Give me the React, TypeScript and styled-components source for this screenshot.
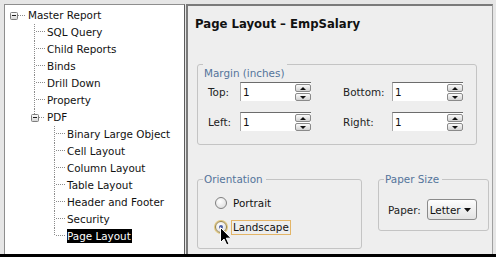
import React from 'react';
import styled, { createGlobalStyle } from 'styled-components';

const FONT = `'DejaVu Sans', 'Noto Sans', sans-serif`;
const DOT = '#8c8c8c';

const GlobalStyle = createGlobalStyle`
    html, body {
        margin: 0;
        padding: 0;
        background: #e6e6e6;
    }
    * {
        box-sizing: border-box;
    }
`;

const Frame = styled.div`
    position: relative;
    width: 496px;
    height: 257px;
    display: flex;
    flex-direction: column;
    background: #e6e6e6;
    font-family: ${FONT};
    font-size: 10.4px;
    color: #111;
    overflow: hidden;
`;

const Main = styled.div`
    flex: 1;
    min-height: 0;
    display: flex;
    gap: 1px;
    padding: 4px 3px 0 4px;
`;

const BottomEdge = styled.div`
    height: 3px;
    background: #000;
`;

/* ---------- tree ---------- */

const TreePanel = styled.div`
    width: 181px;
    flex: none;
    background: #fff;
    border-top: 1px solid #8e8e8e;
    border-left: 1px solid #8e8e8e;
    border-right: 1px solid #5c5c5c;
    padding-top: 2px;
`;

const TreeRow = styled.div`
    display: flex;
    height: 17px;
`;

const IndentCell = styled.div`
    width: 20px;
    flex: none;
`;

const TreeLabel = styled.div<{ $root?: boolean }>`
    margin-left: ${(p) => (p.$root ? 3 : 2)}px;
    line-height: 17px;
    white-space: nowrap;
`;

const Selected = styled.span`
    display: inline-block;
    line-height: 14px;
    padding: 0 1px 0 0;
    background: #000;
    color: #fff;
`;

type ConnectorProps = { last?: boolean; handle?: 'root' | 'child' };

const Connector = ({ last, handle }: ConnectorProps) => {
    if (handle === 'root') {
        return (
            <svg width='20' height='17' style={{ display: 'block', flex: 'none' }}>
                <defs>
                    <linearGradient id='hgRoot' x1='0' y1='0' x2='0' y2='1'>
                        <stop offset='0' stopColor='#ffffff' />
                        <stop offset='1' stopColor='#d4d4d4' />
                    </linearGradient>
                </defs>
                <line x1='13' y1='8.5' x2='20' y2='8.5' stroke={DOT} strokeDasharray='1 1' />
                <rect x='5.5' y='5.5' width='7' height='7' rx='1' fill='url(#hgRoot)' stroke='#7e7e7e' />
                <rect x='7' y='8' width='4' height='1' fill='#1a1a1a' />
            </svg>
        );
    }
    if (handle === 'child') {
        return (
            <svg width='20' height='17' style={{ display: 'block', flex: 'none' }}>
                <defs>
                    <linearGradient id='hgChild' x1='0' y1='0' x2='0' y2='1'>
                        <stop offset='0' stopColor='#ffffff' />
                        <stop offset='1' stopColor='#d4d4d4' />
                    </linearGradient>
                </defs>
                <line x1='9.5' y1='0' x2='9.5' y2='5' stroke={DOT} strokeDasharray='1 1' />
                <line x1='14' y1='8.5' x2='20' y2='8.5' stroke={DOT} strokeDasharray='1 1' />
                <rect x='6.5' y='5.5' width='7' height='7' rx='1' fill='url(#hgChild)' stroke='#7e7e7e' />
                <rect x='8' y='8' width='4' height='1' fill='#1a1a1a' />
            </svg>
        );
    }
    return (
        <svg width='20' height='17' style={{ display: 'block', flex: 'none' }}>
            <line x1='9.5' y1='0' x2='9.5' y2={last ? 8 : 17} stroke={DOT} strokeDasharray='1 1' />
            <line x1='11' y1='7.5' x2='20' y2='7.5' stroke={DOT} strokeDasharray='1 1' />
        </svg>
    );
};

type Node = { label: string; level: number; last?: boolean; handle?: 'root' | 'child'; selected?: boolean };

const NODES: Node[] = [
    { label: 'Master Report', level: 0, handle: 'root' },
    { label: 'SQL Query', level: 1 },
    { label: 'Child Reports', level: 1 },
    { label: 'Binds', level: 1 },
    { label: 'Drill Down', level: 1 },
    { label: 'Property', level: 1 },
    { label: 'PDF', level: 1, handle: 'child' },
    { label: 'Binary Large Object', level: 2 },
    { label: 'Cell Layout', level: 2 },
    { label: 'Column Layout', level: 2 },
    { label: 'Table Layout', level: 2 },
    { label: 'Header and Footer', level: 2 },
    { label: 'Security', level: 2 },
    { label: 'Page Layout', level: 2, last: true, selected: true },
];

const Tree = () => (
    <TreePanel>
        {NODES.map((n) => (
            <TreeRow key={n.label}>
                {Array.from({ length: n.level }).map((_, i) => (
                    <IndentCell key={i} />
                ))}
                <Connector last={n.last} handle={n.handle} />
                <TreeLabel $root={n.level === 0}>{n.selected ? <Selected>{n.label}</Selected> : n.label}</TreeLabel>
            </TreeRow>
        ))}
    </TreePanel>
);

/* ---------- form ---------- */

const FormPanel = styled.div`
    flex: 1;
    background: #eeeeee;
    border-top: 2px solid #7a7a7a;
    border-left: 2px solid #7a7a7a;
    border-right: 1px solid #a0a0a0;
    padding: 11px 0 0 9px;
`;

const Title = styled.h1`
    margin: 0 0 0 -2px;
    font-size: 11.7px;
    line-height: 14px;
    font-weight: bold;
    color: #111;
`;

const GroupBox = styled.fieldset<{ $width: number; $top: number }>`
    width: ${(p) => p.$width}px;
    min-width: 0;
    margin: ${(p) => p.$top}px 0 0 0;
    padding: 0;
    border: 1px solid #c4c4c4;
    border-radius: 3px;
`;

const GroupTitle = styled.legend<{ $drop?: number }>`
    margin-left: 5px;
    padding: ${(p) => p.$drop || 0}px 3px 0 1px;
    line-height: 12px;
    color: #54749b;
`;

const MarginRows = styled.div`
    display: flex;
    flex-direction: column;
    gap: 11px;
    padding: 3px 0 13px 10px;
`;

const MarginRow = styled.div`
    display: flex;
    gap: 32px;
`;

const FieldPair = styled.div<{ $width: number }>`
    display: flex;
    align-items: center;
    width: ${(p) => p.$width}px;
`;

const FieldLabel = styled.span`
    flex: 1;
    color: #222;
    white-space: nowrap;
`;

const Spinner = styled.div`
    display: flex;
    width: 71px;
    height: 19px;
    flex: none;
    background: #fff;
    border-top: 1px solid #6c6c6c;
    border-left: 1px solid #a8a8a8;
`;

const SpinValue = styled.span`
    flex: 1;
    padding-left: 2px;
    line-height: 18px;
    color: #111;
`;

const SpinButtons = styled.div`
    display: flex;
    flex-direction: column;
    gap: 1px;
    width: 16px;
    padding-top: 1px;
`;

const SpinButton = styled.div`
    flex: 1;
    display: flex;
    align-items: center;
    justify-content: center;
    border: 1px solid #8a8a8a;
    border-radius: 2px;
    background: linear-gradient(#fbfbfb, #d2d2d2);
`;

const Arrow = ({ up }: { up?: boolean }) => (
    <svg width='6' height='3' style={{ display: 'block' }}>
        <polygon points={up ? '0,3 3,0 6,3' : '0,0 6,0 3,3'} fill='#111' />
    </svg>
);

const MarginField = ({ label, width }: { label: string; width: number }) => (
    <FieldPair $width={width}>
        <FieldLabel>{label}</FieldLabel>
        <Spinner>
            <SpinValue>1</SpinValue>
            <SpinButtons>
                <SpinButton>
                    <Arrow up />
                </SpinButton>
                <SpinButton>
                    <Arrow />
                </SpinButton>
            </SpinButtons>
        </Spinner>
    </FieldPair>
);

const LowerGroups = styled.div`
    display: flex;
    align-items: flex-start;
    gap: 16px;
`;

const RadioList = styled.div`
    display: flex;
    flex-direction: column;
    gap: 8px;
    padding: 10px 0 13px 17px;
`;

const RadioRow = styled.div`
    display: flex;
    align-items: center;
    gap: 4px;
    height: 16px;
`;

const RadioCircle = styled.span<{ $checked?: boolean }>`
    width: 12px;
    height: 12px;
    flex: none;
    display: flex;
    align-items: center;
    justify-content: center;
    border-radius: 50%;
    border: 1px solid ${(p) => (p.$checked ? '#9a8446' : '#808080')};
    background: radial-gradient(circle at 40% 35%, #ffffff, #d8d8d8);
    box-shadow: ${(p) => (p.$checked ? '0 0 0 1px #e2c77a' : 'none')};
`;

const RadioDot = styled.span`
    width: 4px;
    height: 4px;
    border-radius: 50%;
    background: #4a5fa3;
`;

const RadioLabel = styled.span<{ $focused?: boolean }>`
    padding: 0 1px;
    line-height: 13px;
    border: 1px solid ${(p) => (p.$focused ? '#e3b567' : 'transparent')};
    color: #111;
`;

const PaperRow = styled.div`
    display: flex;
    align-items: center;
    gap: 6px;
    padding: 14px 0 10px 9px;
`;

const Combo = styled.div`
    display: flex;
    align-items: center;
    justify-content: space-between;
    width: 50px;
    height: 21px;
    padding: 0 5px 0 2px;
    border: 1px solid #8a8a8a;
    border-radius: 3px;
    background: linear-gradient(#fdfdfd, #e2e2e2);
    color: #111;
`;

const Pointer = styled.svg`
    position: absolute;
    left: 220px;
    top: 227px;
`;

const Form = () => (
    <FormPanel>
        <Title>Page Layout – EmpSalary</Title>

        <GroupBox $width={280} $top={18}>
            <GroupTitle $drop={18}>Margin (inches)</GroupTitle>
            <MarginRows>
                <MarginRow>
                    <MarginField label='Top:' width={103} />
                    <MarginField label='Bottom:' width={120} />
                </MarginRow>
                <MarginRow>
                    <MarginField label='Left:' width={103} />
                    <MarginField label='Right:' width={120} />
                </MarginRow>
            </MarginRows>
        </GroupBox>

        <LowerGroups>
            <GroupBox $width={165} $top={28}>
                <GroupTitle>Orientation</GroupTitle>
                <RadioList>
                    <RadioRow>
                        <RadioCircle />
                        <RadioLabel>Portrait</RadioLabel>
                    </RadioRow>
                    <RadioRow>
                        <RadioCircle $checked>
                            <RadioDot />
                        </RadioCircle>
                        <RadioLabel $focused>Landscape</RadioLabel>
                    </RadioRow>
                </RadioList>
            </GroupBox>

            <GroupBox $width={111} $top={28}>
                <GroupTitle>Paper Size</GroupTitle>
                <PaperRow>
                    <FieldLabel style={{ flex: 'none' }}>Paper:</FieldLabel>
                    <Combo>
                        <span>Letter</span>
                        <svg width='7' height='4' style={{ display: 'block' }}>
                            <polygon points='0,0 7,0 3.5,4' fill='#111' />
                        </svg>
                    </Combo>
                </PaperRow>
            </GroupBox>
        </LowerGroups>
    </FormPanel>
);

const App = () => (
    <>
        <GlobalStyle />
        <Frame>
            <Main>
                <Tree />
                <Form />
            </Main>
            <BottomEdge />
            <Pointer width='12' height='19' viewBox='0 0 12 19'>
                <path d='M0.5 0.5 L0.5 15.5 L4 12 L6.8 18 L9 17 L6.3 11.2 L11 11.2 Z' fill='#000' stroke='#fff' strokeWidth='1' />
            </Pointer>
        </Frame>
    </>
);

export default App;
